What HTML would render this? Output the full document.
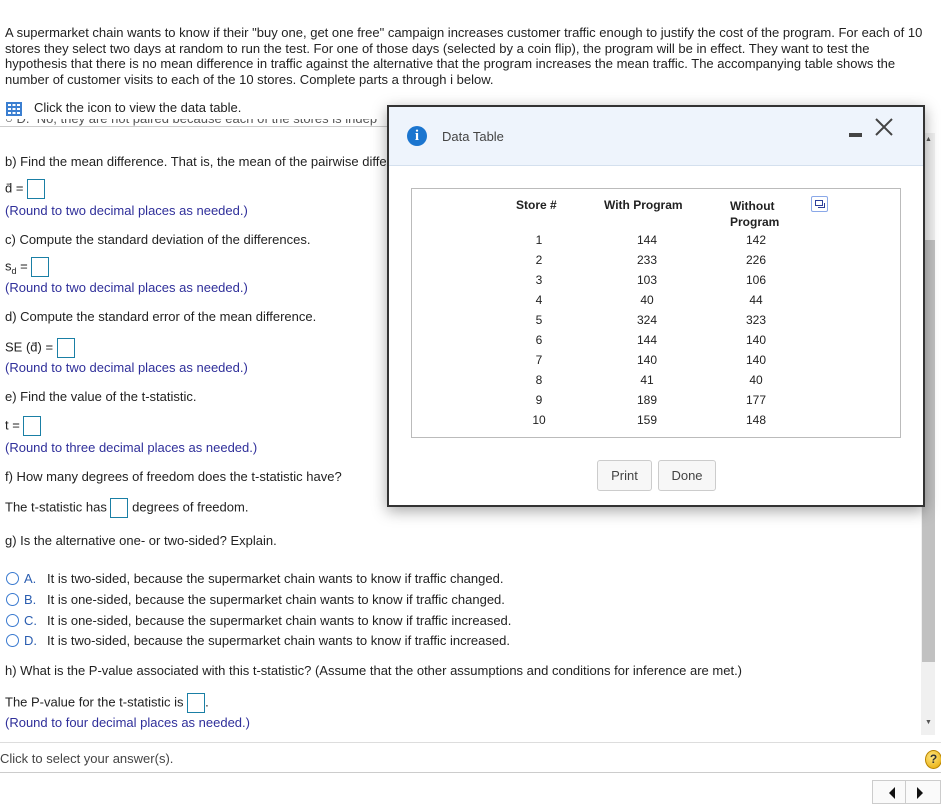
<!DOCTYPE html>
<html><head><meta charset="utf-8"><style>
*{margin:0;padding:0;box-sizing:border-box}
body{width:941px;height:804px;position:relative;overflow:hidden;background:#fff;font-family:"Liberation Sans",Arial,sans-serif;font-size:13px;color:#222}
.a{position:absolute;white-space:nowrap}
.blue{color:#2f2f9a}
.box{display:inline-block;width:18px;height:20px;border:1px solid #1a7fa5;vertical-align:middle;background:#fff}
.rad{display:inline-block;width:13px;height:13px;border:1px solid #3a7ad0;border-radius:50%;vertical-align:-2px;margin-right:5px}
.lt{color:#2a5db0;display:inline-block;width:23px}
</style></head><body>
<div class="a" style="left:5px;top:25px;line-height:15.5px;white-space:normal;width:920px">A supermarket chain wants to know if their "buy one, get one free" campaign increases customer traffic enough to justify the cost of the program. For each of 10 stores they select two days at random to run the test. For one of those days (selected by a coin flip), the program will be in effect. They want to test the hypothesis that there is no mean difference in traffic against the alternative that the program increases the mean traffic. The accompanying table shows the number of customer visits to each of the 10 stores. Complete parts a through i below.</div>
<svg class="a" style="left:6px;top:102px" width="16" height="14"><rect width="16" height="14" fill="#3b7fd1"/><g fill="#fff"><rect x="2" y="2" width="3" height="2"/><rect x="6.5" y="2" width="3" height="2"/><rect x="11" y="2" width="3" height="2"/><rect x="2" y="6" width="3" height="2"/><rect x="6.5" y="6" width="3" height="2"/><rect x="11" y="6" width="3" height="2"/><rect x="2" y="10" width="3" height="2"/><rect x="6.5" y="10" width="3" height="2"/><rect x="11" y="10" width="3" height="2"/></g></svg>
<div class="a" style="left:34px;top:100px">Click the icon to view the data table.</div>
<div class="a" style="left:0;top:126px;width:920px;border-top:1px solid #ccc"></div>
<div class="a" style="left:5px;top:119px;height:7px;width:385px;overflow:hidden;color:#555"><div style="margin-top:-8px">○ D.&nbsp; No, they are not paired because each of the stores is indep</div></div>
<div class="a" style="left:5px;top:154px">b) Find the mean difference. That is, the mean of the pairwise diffe</div>
<div class="a" style="left:5px;top:179px">d̄ = <span class="box"></span></div>
<div class="a blue" style="left:5px;top:203px">(Round to two decimal places as needed.)</div>
<div class="a" style="left:5px;top:232px">c) Compute the standard deviation of the differences.</div>
<div class="a" style="left:5px;top:257px">s<sub style="font-size:9px">d</sub> = <span class="box"></span></div>
<div class="a blue" style="left:5px;top:280px">(Round to two decimal places as needed.)</div>
<div class="a" style="left:5px;top:309px">d) Compute the standard error of the mean difference.</div>
<div class="a" style="left:5px;top:338px">SE (d̄) = <span class="box"></span></div>
<div class="a blue" style="left:5px;top:360px">(Round to two decimal places as needed.)</div>
<div class="a" style="left:5px;top:389px">e) Find the value of the t-statistic.</div>
<div class="a" style="left:5px;top:416px">t = <span class="box"></span></div>
<div class="a blue" style="left:5px;top:440px">(Round to three decimal places as needed.)</div>
<div class="a" style="left:5px;top:469px">f) How many degrees of freedom does the t-statistic have?</div>
<div class="a" style="left:5px;top:498px">The t-statistic has <span class="box"></span> degrees of freedom.</div>
<div class="a" style="left:5px;top:533px">g) Is the alternative one- or two-sided? Explain.</div>
<div class="a" style="left:6px;top:571px"><span class="rad"></span><span class="lt">A.</span>It is two-sided, because the supermarket chain wants to know if traffic changed.</div>
<div class="a" style="left:6px;top:592px"><span class="rad"></span><span class="lt">B.</span>It is one-sided, because the supermarket chain wants to know if traffic changed.</div>
<div class="a" style="left:6px;top:613px"><span class="rad"></span><span class="lt">C.</span>It is one-sided, because the supermarket chain wants to know if traffic increased.</div>
<div class="a" style="left:6px;top:633px"><span class="rad"></span><span class="lt">D.</span>It is two-sided, because the supermarket chain wants to know if traffic increased.</div>
<div class="a" style="left:5px;top:663px">h) What is the P-value associated with this t-statistic? (Assume that the other assumptions and conditions for inference are met.)</div>
<div class="a" style="left:5px;top:693px">The P-value for the t-statistic is <span class="box"></span>.</div>
<div class="a blue" style="left:5px;top:715px">(Round to four decimal places as needed.)</div>
<!-- scrollbar -->
<div class="a" style="left:921px;top:133px;width:14px;height:602px;background:#f0f0f0"></div>
<div class="a" style="left:922px;top:240px;width:13px;height:422px;background:#c1c1c1"></div>
<div class="a" style="left:925px;top:136px;font-size:7px;color:#555">▲</div>
<div class="a" style="left:925px;top:719px;font-size:7px;color:#555">▼</div>
<div class="a" style="left:0;top:742px;width:941px;border-top:1px solid #ddd"></div>
<div class="a" style="left:0;top:751px;color:#444;font-size:13px">Click to select your answer(s).</div>
<div class="a" style="left:925px;top:750px;width:17px;height:19px;border-radius:50%;background:radial-gradient(circle at 40% 35%,#ffe680,#e6a800);border:1px solid #b88400;text-align:center;font-weight:bold;font-size:12px;line-height:17px;color:#333">?</div>
<div class="a" style="left:0;top:772px;width:941px;border-top:1px solid #ccc"></div>
<div class="a" style="left:872px;top:780px;width:69px;height:24px;border:1px solid #ccc;background:#fafafa"></div>
<svg class="a" style="left:884px;top:786px" width="50" height="14"><path d="M11 1 L5 7 L11 13Z" fill="#111"/><path d="M33 1 L39 7 L33 13Z" fill="#111"/></svg>
<div class="a" style="left:905px;top:780px;height:24px;border-left:1px solid #ccc"></div>
<!-- modal -->
<div class="a" style="left:387px;top:105px;width:538px;height:402px;border:2px solid #333;background:#fff;box-shadow:0 4px 14px rgba(0,0,0,.35)">
 <div style="position:absolute;left:0;top:0;width:100%;height:59px;background:#eef4fc;border-bottom:1px solid #d4e0ee"></div>
 <div class="a" style="left:18px;top:19px;width:20px;height:20px;border-radius:50%;background:#1b75cf;color:#fff;font-weight:bold;font-family:'Liberation Serif',serif;font-size:15px;text-align:center;line-height:20px">i</div>
 <div class="a" style="left:53px;top:22px;font-size:13px;color:#444">Data Table</div>
 <div class="a" style="left:460px;top:26px;width:13px;height:4px;background:#444"></div>
 <svg class="a" style="left:485px;top:10px" width="20" height="20"><path d="M2 2 L18 18 M18 2 L2 18" stroke="#444" stroke-width="2"/></svg>
 <div class="a" style="left:22px;top:81px;width:490px;height:250px;border:1px solid #bbb"></div>
 <div class="a" style="left:127px;top:91px;font-weight:bold;font-size:12px">Store #</div>
 <div class="a" style="left:215px;top:91px;font-weight:bold;font-size:12px">With Program</div>
 <div class="a" style="left:341px;top:91px;font-weight:bold;font-size:12px;line-height:16px">Without<br>Program</div>
 <div class="a" style="left:422px;top:89px;width:17px;height:16px;border:1px solid #8aa8e8;border-radius:2px"><div style="position:absolute;left:3px;top:3px;width:8px;height:6px;border:1.5px solid #2c3f9a"></div><div style="position:absolute;left:6px;top:6px;width:7px;height:5px;border:1px solid #2c3f9a;border-top:none;border-left:none"></div></div>
 <div class="a" style="left:0;top:123px;width:100%;font-size:12px;line-height:20px">
  <div style="position:absolute;left:120px;width:60px;text-align:center">1<br>2<br>3<br>4<br>5<br>6<br>7<br>8<br>9<br>10</div>
  <div style="position:absolute;left:228px;width:60px;text-align:center">144<br>233<br>103<br>40<br>324<br>144<br>140<br>41<br>189<br>159</div>
  <div style="position:absolute;left:337px;width:60px;text-align:center">142<br>226<br>106<br>44<br>323<br>140<br>140<br>40<br>177<br>148</div>
 </div>
 <div class="a" style="left:208px;top:353px;width:55px;height:31px;border:1px solid #ccc;border-radius:3px;background:#f7f7f7;text-align:center;line-height:29px;font-size:13px;color:#444">Print</div>
 <div class="a" style="left:269px;top:353px;width:58px;height:31px;border:1px solid #ccc;border-radius:3px;background:#f7f7f7;text-align:center;line-height:29px;font-size:13px;color:#444">Done</div>
</div>
</body></html>
